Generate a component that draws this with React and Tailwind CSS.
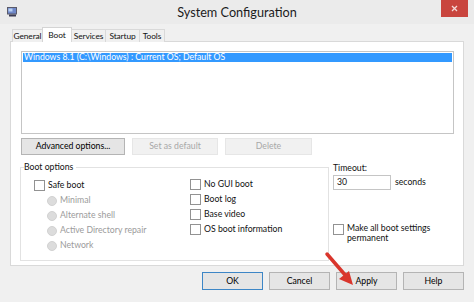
import React from "react";

const Checkbox = ({ label, className = "" }) => (
  <div className={`flex items-center h-[15px] ${className}`}>
    <span className="w-[11px] h-[11px] border border-[#929292] bg-white shrink-0" />
    <span className="ml-[3px] leading-none">{label}</span>
  </div>
);

const Radio = ({ label }) => (
  <div className="flex items-center h-[15px] text-[#9b9b9b]">
    <span className="w-[10px] h-[10px] rounded-full bg-[#dcdcdc] border border-[#d2d2d2] shrink-0" />
    <span className="ml-[3px] leading-none">{label}</span>
  </div>
);

const Btn = ({ children, className = "", disabled = false }) => (
  <div
    className={`flex items-center justify-center leading-none ${
      disabled
        ? "bg-[#f1f1f1] border border-[#e6e6e6] text-[#a8a8a8]"
        : "bg-[#e5e5e5] border border-[#b4b4b4] text-black"
    } ${className}`}
  >
    {children}
  </div>
);

// tab name + width, measured off the strip
const tabs = [
  ["General", "w-[31px]"],
  ["Boot", "w-[30px]"],
  ["Services", "w-[35px]"],
  ["Startup", "w-[35px]"],
  ["Tools", "w-[26px]"],
];

export default function App() {
  return (
    <div className="w-[474px] h-[302px] bg-[#f0f0f0] overflow-hidden relative font-['Lato','Noto_Sans',sans-serif] text-[8.7px] text-[#111]">
      {/* title bar */}
      <div className="h-[24px] bg-[#ebebeb] flex items-center relative">
        <svg className="ml-[7px]" width="11" height="10" viewBox="0 0 11 10">
          <rect x="0.5" y="0.5" width="9" height="6.5" fill="#6f88c9" stroke="#5a5a6a" />
          <rect x="1.5" y="1.5" width="4" height="3" fill="#b9d0f3" />
          <rect x="2" y="7.5" width="7" height="2" fill="#3a3a52" />
        </svg>
        <div className="absolute left-0 right-0 top-[5px] text-center text-[12.7px] leading-[14px] text-[#1b1b1b]">
          System Configuration
        </div>
        <div className="absolute right-[6px] top-0 w-[27px] h-[17px] bg-[#c9453e] flex items-center justify-center">
          <svg width="7" height="7" viewBox="0 0 7 7">
            <path d="M1 1 L6 6 M6 1 L1 6" stroke="#f4d9d7" strokeWidth="1.3" />
          </svg>
        </div>
      </div>

      {/* tabs */}
      <div className="flex items-end h-[15px] mt-[3px] ml-[12px] relative z-10 text-[8.4px] tracking-[-0.1px]">
        {tabs.map(([t, w], i) =>
          t === "Boot" ? (
            <div
              key={t}
              className={`${w} h-[15px] bg-white border border-b-0 border-[#d4d4d4] -ml-px flex items-center justify-center leading-none whitespace-nowrap`}
            >
              {t}
            </div>
          ) : (
            <div
              key={t}
              className={`${w} h-[13px] bg-[#f0f0f0] border border-[#d9d9d9] border-b-0 flex items-center justify-center leading-none whitespace-nowrap ${
                i > 0 ? "-ml-px" : ""
              }`}
            >
              {t}
            </div>
          )
        )}
      </div>

      {/* panel */}
      <div className="ml-[10px] w-[454px] h-[225px] -mt-px bg-white border border-[#d9d9d9] pl-[10px] pt-[9px]">
        <div className="w-[433px] h-[83px] border border-[#c5c5c5] p-px">
          <div className="h-[9px] bg-[#3399ff] text-white leading-none flex items-center px-px">
            Windows 8.1 (C:\Windows) : Current OS; Default OS
          </div>
        </div>

        <div className="flex gap-[7px] mt-[4px] h-[17px]">
          <Btn className="w-[104px]">Advanced options...</Btn>
          <Btn className="w-[86px]" disabled>
            Set as default
          </Btn>
          <Btn className="w-[87px]" disabled>
            Delete
          </Btn>
        </div>

        <div className="flex">
          <fieldset className="-ml-px mt-[6px] w-[309px] h-[100px] border border-[#e2e2e2]">
            <legend className="ml-[3px] leading-[12px] px-0">Boot options&nbsp;</legend>
            <div className="flex pl-[13px] pt-[5px]">
              <div className="w-[156px] flex flex-col">
                <Checkbox label="Safe boot" />
                <div className="pl-[13px]">
                  <Radio label="Minimal" />
                  <Radio label="Alternate shell" />
                  <Radio label="Active Directory repair" />
                  <Radio label="Network" />
                </div>
              </div>
              <div className="flex flex-col -mt-px">
                <Checkbox label="No GUI boot" />
                <Checkbox label="Boot log" />
                <Checkbox label="Base video" />
                <Checkbox label="OS boot information" />
              </div>
            </div>
          </fieldset>

          <div className="ml-[4px] mt-[7px] flex flex-col">
            <div className="leading-[12px]">Timeout:</div>
            <div className="flex items-center mt-px">
              <div className="w-[58px] h-[15px] border border-[#c5c5c5] bg-white pl-[3px] flex items-center leading-none">
                30
              </div>
              <span className="ml-[4px] leading-none">seconds</span>
            </div>
            <div className="flex items-start mt-[34px]">
              <span className="w-[11px] h-[11px] border border-[#929292] bg-white shrink-0" />
              <span className="ml-[3px] leading-[10px] -mt-px">
                Make all boot settings
                <br />
                permanent
              </span>
            </div>
          </div>
        </div>
      </div>

      {/* bottom buttons */}
      <div className="flex justify-end gap-[6px] mt-[6px] pr-[10px]">
        <Btn className="w-[61px] h-[18px] !border-[#3d86c6]">OK</Btn>
        <Btn className="w-[61px] h-[18px]">Cancel</Btn>
        <Btn className="w-[61px] h-[18px]">Apply</Btn>
        <Btn className="w-[61px] h-[18px]">Help</Btn>
      </div>

      {/* red annotation arrow */}
      <svg
        className="absolute left-[322px] top-[250px] pointer-events-none"
        width="40"
        height="40"
        viewBox="0 0 40 40"
      >
        <path d="M5 4 L24 26" stroke="#d9352c" strokeWidth="3.5" strokeLinecap="round" />
        <path d="M31 35 L17 29 L27 21 Z" fill="#d9352c" />
      </svg>
    </div>
  );
}
